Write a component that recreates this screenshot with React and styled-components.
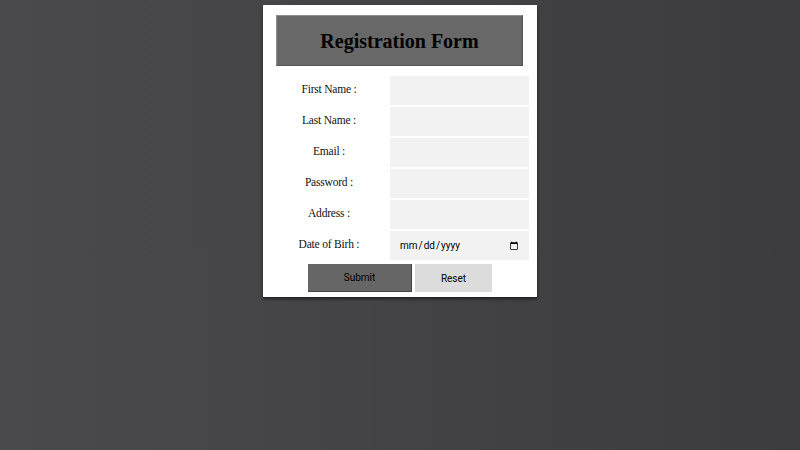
import React from 'react';
import styled, { createGlobalStyle } from 'styled-components';

const GlobalStyle = createGlobalStyle`
  html, body {
    margin: 0;
    padding: 0;
  }
  body {
    min-height: 100vh;
    background: linear-gradient(to right, #4a4a4c, #3c3c3f);
    font-family: "Liberation Serif", "Times New Roman", serif;
  }
`;

const Card = styled.form`
  width: 274px;
  box-sizing: border-box;
  margin: 5px auto 0;
  padding: 10px 8px 5px 13px;
  background: #fff;
  box-shadow: 0 2px 3px rgba(0, 0, 0, 0.55);
`;

const Header = styled.div`
  width: 247px;
  height: 51px;
  box-sizing: border-box;
  display: flex;
  align-items: center;
  justify-content: center;
  padding-top: 2px;
  background: #686868;
  border: 1px solid #555;
  border-top-color: #8e8e8e;
  border-left-color: #8e8e8e;
`;

const Title = styled.h1`
  margin: 0;
  font-family: "Liberation Serif", "Times New Roman", serif;
  font-size: 20px;
  font-weight: bold;
  color: #000;
`;

const Fields = styled.div`
  display: grid;
  grid-template-columns: 106px 139px;
  grid-auto-rows: 29px;
  column-gap: 8px;
  row-gap: 2px;
  margin-top: 10px;
`;

const Label = styled.label`
  display: flex;
  align-items: center;
  justify-content: center;
  padding-bottom: 3px;
  font-family: "Liberation Serif", "Times New Roman", serif;
  font-size: 11.5px;
  letter-spacing: -0.2px;
  color: #111;
`;

const Input = styled.input`
  box-sizing: border-box;
  width: 100%;
  height: 29px;
  margin: 0;
  padding: 0 8px 0 9px;
  border: none;
  outline: none;
  background: #f2f2f2;
  font-family: Roboto, "Liberation Sans", sans-serif;
  font-size: 10px;
  color: #000;
`;

const ButtonRow = styled.div`
  display: flex;
  justify-content: center;
  gap: 3px;
  margin: 4px 5px 0 0;
`;

const Button = styled.button`
  height: 28px;
  width: ${(p) => p.$width}px;
  box-sizing: border-box;
  padding: 0;
  border: none;
  border-right: ${(p) => (p.$primary ? '1px solid #444' : 'none')};
  border-bottom: ${(p) => (p.$primary ? '1px solid #444' : 'none')};
  background: ${(p) => (p.$primary ? '#666' : '#dcdcdc')};
  font-family: Roboto, "Liberation Sans", sans-serif;
  font-size: 10px;
  color: #000;
  cursor: pointer;
`;

const fields = [
  { id: 'first', label: 'First Name :', type: 'text' },
  { id: 'last', label: 'Last Name :', type: 'text' },
  { id: 'email', label: 'Email :', type: 'email' },
  { id: 'password', label: 'Password :', type: 'password' },
  { id: 'address', label: 'Address :', type: 'text' },
  { id: 'dob', label: 'Date of Birh :', type: 'date' },
];

const App = () => {
  return (
    <>
      <GlobalStyle />
      <Card onSubmit={(e) => e.preventDefault()}>
        <Header>
          <Title>Registration Form</Title>
        </Header>
        <Fields>
          {fields.map((f) => (
            <React.Fragment key={f.id}>
              <Label htmlFor={f.id}>{f.label}</Label>
              <Input id={f.id} type={f.type} />
            </React.Fragment>
          ))}
        </Fields>
        <ButtonRow>
          <Button type="submit" $primary $width={104}>Submit</Button>
          <Button type="reset" $width={77}>Reset</Button>
        </ButtonRow>
      </Card>
    </>
  );
};

export default App;
